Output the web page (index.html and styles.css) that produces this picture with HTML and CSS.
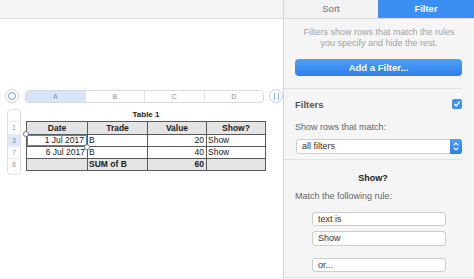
FILE: index.html
```html
<!DOCTYPE html>
<html lang="en">
<head>
  <meta charset="UTF-8" />
  <meta name="viewport" content="width=device-width, initial-scale=1.0"/>
  <title>Table 1 – Filter</title>
  <link rel="stylesheet" href="styles.css">
</head>
<body>

  <div class="app">
    <section class="sheet">
      <div class="toolbar"></div>

      <div class="canvas">
        <div class="col-bar">
          <span class="round-btn"><span class="ring"></span></span>
          <div class="col-heads">
            <span class="col-head selected">A</span>
            <span class="col-head">B</span>
            <span class="col-head">C</span>
            <span class="col-head">D</span>
          </div>
          <span class="round-btn pause"><span class="bars"></span></span>
        </div>

        <div class="table-area">
          <div class="row-heads">
            <span class="row-head title-gap"></span>
            <span class="row-head first">1</span>
            <span class="row-head selected">3</span>
            <span class="row-head">7</span>
            <span class="row-head">8</span>
          </div>

          <div class="table-box">
            <div class="table-title">Table 1</div>
            <div class="grid">
              <div class="cell head">Date</div>
              <div class="cell head">Trade</div>
              <div class="cell head">Value</div>
              <div class="cell head">Show?</div>

              <div class="cell num active">1 Jul 2017</div>
              <div class="cell">B</div>
              <div class="cell num">20</div>
              <div class="cell">Show</div>

              <div class="cell num">6 Jul 2017</div>
              <div class="cell">B</div>
              <div class="cell num">40</div>
              <div class="cell">Show</div>

              <div class="cell foot"></div>
              <div class="cell foot bold">SUM of B</div>
              <div class="cell foot num bold">60</div>
              <div class="cell foot"></div>
            </div>
            <span class="handle top-left"></span>
            <span class="handle bottom-right"></span>
          </div>
        </div>
      </div>
    </section>

    <aside class="inspector">
      <div class="tabs">
        <span class="tab">Sort</span>
        <span class="tab current">Filter</span>
      </div>

      <p class="hint">Filters show rows that match the rules<br>you specify and hide the rest.</p>
      <button class="add-btn">Add a Filter...</button>

      <div class="section">
        <div class="section-head">
          <span class="section-title">Filters</span>
          <span class="checkbox">
            <svg viewBox="0 0 10 10" width="10" height="10"><path d="M2.6 5.2 L4.3 6.9 L7.5 3" fill="none" stroke="#fff" stroke-width="1.4" stroke-linecap="round" stroke-linejoin="round"/></svg>
          </span>
        </div>
        <div class="label">Show rows that match:</div>
        <div class="select">
          <span class="select-text">all filters</span>
          <span class="stepper">
            <svg viewBox="0 0 12 15" width="12" height="15"><path d="M4 6 L6 4 L8 6 M4 9 L6 11 L8 9" fill="none" stroke="#fff" stroke-width="1.1" stroke-linecap="round" stroke-linejoin="round"/></svg>
          </span>
        </div>
      </div>

      <div class="section rule">
        <div class="rule-title">Show?</div>
        <div class="label">Match the following rule:</div>
        <div class="field">text is</div>
        <div class="field second">Show</div>
        <div class="field or">or...</div>
      </div>
    </aside>
  </div>

</body>
</html>
```

FILE: styles.css
```css
body {
  margin: 0;
  font-family: 'Liberation Sans', Arial, sans-serif;
  background: #fff;
  color: #222;
}

.app {
  display: flex;
  width: 474px;
  height: 279px;
  overflow: hidden;
}

/* ---------- hoja ---------- */

.sheet {
  width: 283px;
  flex: none;
  border-right: 1px solid #d6d6d6;
  overflow: hidden;
}

.toolbar {
  height: 18px;
  background: #f4f4f4;
  border-bottom: 1px solid #dcdcdc;
}

.canvas {
  padding-top: 70px;
}

.col-bar {
  display: flex;
  align-items: center;
  height: 14px;
}

.round-btn {
  flex: none;
  width: 12px;
  height: 12px;
  margin-left: 5px;
  border: 1px solid #d2d2d2;
  border-radius: 50%;
  background: #fff;
  display: flex;
  align-items: center;
  justify-content: center;
}

.ring {
  width: 6px;
  height: 6px;
  border: 1.5px solid #6ca2dc;
  border-radius: 50%;
}

.round-btn.pause {
  margin-left: 5px;
  border-color: #bcd3ec;
}

.bars {
  width: 3px;
  height: 7px;
  border-left: 1px solid #8fb5e0;
  border-right: 1px solid #8fb5e0;
}

.col-heads {
  display: flex;
  margin-left: 6px;
  width: 240px;
  height: 13px;
  border: 1px solid #dadada;
  border-radius: 4px;
  box-sizing: border-box;
  overflow: hidden;
  background: #fff;
}

.col-head {
  flex: 1;
  font-size: 7px;
  color: #8a8a8a;
  text-align: center;
  line-height: 11px;
  border-left: 1px solid #e2e2e2;
}

.col-head:first-child {
  border-left: none;
}

.col-head.selected {
  background: #d6e6f8;
  color: #6d93bf;
}

.table-area {
  display: flex;
  margin-top: 6px;
}

.row-heads {
  margin-left: 7px;
  width: 12px;
  display: flex;
  flex-direction: column;
  border: 1px solid #e0e0e0;
  border-radius: 4px;
  background: #fff;
  overflow: hidden;
  padding-bottom: 4px;
}

.row-head {
  height: 12px;
  font-size: 7px;
  line-height: 12px;
  color: #999;
  text-align: center;
  border-top: 1px solid #ececec;
  box-sizing: border-box;
}

.row-head.title-gap {
  height: 11px;
  border-top: none;
}

.row-head.first {
  height: 13px;
}

.row-head.selected {
  background: #dce9f8;
  color: #5d8fcb;
}

.table-box {
  position: relative;
  margin-left: 5px;
  width: 240px;
}

.table-title {
  height: 12px;
  font-size: 8px;
  font-weight: bold;
  line-height: 12px;
  text-align: center;
  color: #222;
}

.grid {
  display: grid;
  grid-template-columns: 60px 59px 58px 58px;
  grid-template-rows: 12px 11px 11px 11px;
  gap: 1px;
  padding: 1px;
  background: #5a5a5a;
  width: 240px;
  box-sizing: border-box;
}

.cell {
  background: #fff;
  font-size: 8.5px;
  line-height: 11px;
  padding: 0 1px;
  white-space: nowrap;
  overflow: hidden;
}

.cell.head {
  background: #e4e4e4;
  font-weight: bold;
  text-align: center;
  line-height: 12px;
}

.cell.foot {
  background: #e4e4e4;
}

.cell.bold {
  font-weight: bold;
}

.cell.num {
  text-align: right;
  padding-right: 2px;
}

.cell.active {
  padding-right: 3px;
  box-shadow: inset 0 0 0 1px #4f86c6;
}

.handle {
  position: absolute;
  width: 4px;
  height: 4px;
  border: 1px solid #6b7c90;
  border-radius: 50%;
  background: #fff;
}

.handle.top-left {
  left: -3px;
  top: 22px;
}

.handle.bottom-right {
  left: 58px;
  top: 35px;
}

/* ---------- inspector ---------- */

.inspector {
  flex: 1;
  background: #f5f5f5;
  height: 277px;
  border-bottom: 1px solid #dedede;
  font-size: 9px;
}

.tabs {
  display: flex;
  height: 18px;
  border-bottom: 1px solid #dadada;
}

.tab {
  flex: 1;
  text-align: center;
  line-height: 18px;
  font-size: 9.5px;
  color: #6f6f6f;
  background: #f2f2f2;
}

.tab.current {
  flex: none;
  width: 96px;
  background: #3c8ff2;
  color: #fff;
  font-weight: bold;
}

.hint {
  margin: 8px 0 0;
  text-align: center;
  line-height: 11px;
  color: #a2a2a2;
}

.add-btn {
  display: block;
  width: 167px;
  height: 17px;
  margin: 10px 0 0 11px;
  padding: 0;
  border: none;
  border-radius: 4px;
  background: linear-gradient(#4fa0f8, #2d7fec);
  color: #fff;
  font-family: inherit;
  font-size: 9.5px;
  font-weight: bold;
}

.section {
  margin: 12px 12px 0 0;
  padding-left: 11px;
  border-top: 1px solid #e2e2e2;
}

.section-head {
  display: flex;
  justify-content: space-between;
  align-items: center;
  margin-top: 9px;
  height: 12px;
}

.section-title {
  font-weight: bold;
  font-size: 9.5px;
  color: #555;
}

.checkbox {
  width: 10px;
  height: 10px;
  border-radius: 2px;
  background: #3d8ff1;
  display: flex;
}

.label {
  margin-top: 11px;
  line-height: 12px;
  color: #666;
  font-size: 9px;
}

.select {
  display: flex;
  margin: 6px 0 5px 1px;
  height: 15px;
  border: 1px solid #cfcfcf;
  border-radius: 3px;
  background: #fff;
  box-sizing: border-box;
}

.select-text {
  flex: 1;
  padding-left: 5px;
  line-height: 13px;
  color: #333;
  font-size: 9px;
}

.stepper {
  width: 12px;
  margin: -1px -1px -1px 0;
  border-radius: 0 3px 3px 0;
  background: linear-gradient(#4a9cf7, #2c7eeb);
  display: flex;
}

.rule {
  margin-top: 0;
}

.rule-title {
  margin: 12px 0 0 -11px;
  text-align: center;
  line-height: 12px;
  font-weight: bold;
  font-size: 9px;
  color: #222;
}

.rule .label {
  margin-top: 6px;
}

.field {
  margin: 10px 0 0 17px;
  width: 134px;
  height: 14px;
  box-sizing: border-box;
  border: 1px solid #cdcdcd;
  border-radius: 3px;
  background: #fff;
  padding-left: 5px;
  line-height: 12px;
  color: #333;
  font-size: 9px;
}

.field.second {
  margin-top: 5px;
  height: 15px;
  line-height: 13px;
}

.field.or {
  margin-top: 12px;
}
```
